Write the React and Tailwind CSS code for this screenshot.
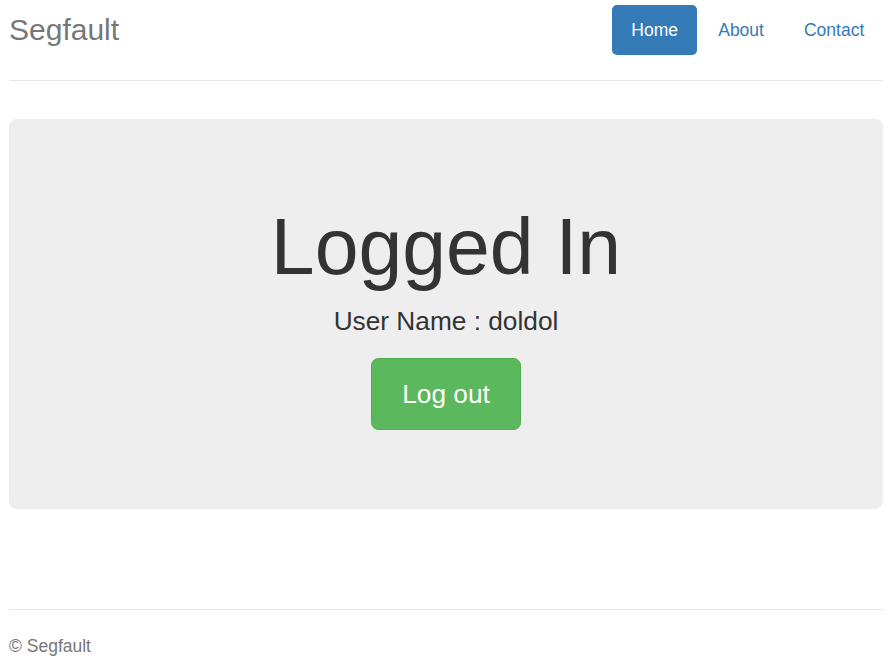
export default function App() {
  return (
    <div className="min-h-[667px] bg-white px-[9px] text-[#333] [font-family:'Liberation_Sans',Arial,sans-serif]">
      <header className="flex items-start justify-between border-b border-[#e5e5e5] pb-[25px] pt-[5px]">
        <h3 className="m-0 text-[30px] leading-[50px] text-[#777]">Segfault</h3>
        <nav className="flex gap-[2.5px]">
          <a className="block rounded-[5px] bg-[#337ab7] px-[19px] py-[12.5px] text-[17.5px] leading-[25px] text-white">Home</a>
          <a className="block rounded-[5px] px-[18.75px] py-[12.5px] text-[17.5px] leading-[25px] text-[#337ab7]">About</a>
          <a className="block rounded-[5px] px-[18.75px] py-[12.5px] text-[17.5px] leading-[25px] text-[#337ab7]">Contact</a>
        </nav>
      </header>
      <div className="mt-[37.5px] rounded-[7.5px] bg-[#eee] px-[75px] pb-[60px] pt-[60px] text-center">
        <h1 className="mt-[25px] mb-[12.5px] text-[78.75px] leading-[1.1] font-normal">Logged In</h1>
        <p className="mb-[18.75px] text-[26.25px] leading-[1.4] font-light">User Name : doldol</p>
        <p className="mb-[18.75px]">
          <a className="inline-block rounded-[7.5px] border border-[#4cae4c] bg-[#5cb85c] px-[30px] py-[17.5px] text-[26.25px] leading-[35px] text-white">Log out</a>
        </p>
      </div>
      <footer className="mt-[100px] border-t border-[#e5e5e5] pt-[23.75px]">
        <p className="mb-[12.5px] text-[17.5px] leading-[25px] text-[#777]">© Segfault</p>
      </footer>
    </div>
  );
}
